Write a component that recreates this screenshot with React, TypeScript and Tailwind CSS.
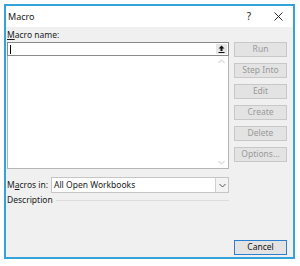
import React from 'react';

const font = { fontFamily: '"Noto Sans", "Open Sans", sans-serif' };

const SideButton: React.FC<{ label: string }> = ({ label }) => (
  <div className="h-[15px] w-[53px] border border-[#c8c8c8] bg-[#e3e3e3] flex items-center justify-center text-[8.5px] text-[#9a9a9a] leading-none">
    {label}
  </div>
);

export default function App() {
  return (
    <div className="w-[300px] h-[266px] bg-white" style={font}>
      <div className="ml-[4px] pt-[4px]">
        <div className="w-[291px] h-[255px] border-2 border-[#34a3dc] bg-[#f0f0f0] flex flex-col text-[#1a1a1a]">
          {/* Title bar */}
          <div className="h-[21px] bg-white flex items-center pl-[2px] pr-[10px] text-[9px]">
            <span>Macro</span>
            <span className="ml-auto mr-[23px] text-[10px]">?</span>
            <svg width="9" height="9" viewBox="0 0 9 9" className="mb-[1px]">
              <path d="M0.5 0.5 L8.5 8.5 M8.5 0.5 L0.5 8.5" stroke="#333" strokeWidth="1" />
            </svg>
          </div>

          {/* Body */}
          <div className="flex flex-1 pl-[1px] pr-[6px]">
            <div className="w-[223px] flex flex-col">
              <div className="h-[14px] mt-[1px] flex items-center text-[8.5px]">
                <span><span className="underline">M</span>acro name:</span>
              </div>
              <div className="h-[14px] border border-[#8a8a8a] bg-white flex items-center">
                <div className="ml-[2px] w-px h-[9px] bg-black" />
                <div className="ml-auto mr-[1px] h-[10px] w-[11px] bg-[#e6e6e6] flex items-center justify-center">
                  <svg width="7" height="8" viewBox="0 0 7 8">
                    <path d="M3.5 0.5 L6.5 3.5 L4.5 3.5 L4.5 6 L2.5 6 L2.5 3.5 L0.5 3.5 Z" fill="#111" />
                    <path d="M0.5 7.5 L6.5 7.5" stroke="#111" strokeWidth="1" />
                  </svg>
                </div>
              </div>
              <div className="h-[113px] border border-t-0 border-[#b5b5b5] bg-white flex">
                <div className="flex-1" />
                <div className="w-[14px] flex flex-col items-center justify-between py-[3px]">
                  <svg width="7" height="5" viewBox="0 0 7 5"><path d="M0.5 4 L3.5 1 L6.5 4" stroke="#c4c4c4" fill="none" /></svg>
                  <svg width="7" height="5" viewBox="0 0 7 5"><path d="M0.5 1 L3.5 4 L6.5 1" stroke="#c4c4c4" fill="none" /></svg>
                </div>
              </div>
              <div className="h-[16px] mt-[8px] flex items-center text-[8.5px]">
                <span className="w-[44px]">M<span className="underline">a</span>cros in:</span>
                <div className="flex-1 h-[16px] border border-[#c5c5c5] bg-white flex items-center pl-[2px]">
                  <span>All Open Workbooks</span>
                  <div className="ml-auto h-[14px] w-[13px] border-l border-[#d0d0d0] bg-[#f3f3f3] flex items-center justify-center">
                    <svg width="7" height="5" viewBox="0 0 7 5"><path d="M0.5 1 L3.5 4 L6.5 1" stroke="#555" fill="none" /></svg>
                  </div>
                </div>
              </div>
              <div className="h-[14px] flex items-center text-[8.5px]">
                <span>Description</span>
                <div className="flex-1 ml-[3px] h-px bg-[#dcdcdc]" />
              </div>
            </div>

            <div className="ml-[5px] flex flex-col pt-[15px] gap-[6px]">
              <SideButton label="Run" />
              <SideButton label="Step Into" />
              <SideButton label="Edit" />
              <SideButton label="Create" />
              <SideButton label="Delete" />
              <SideButton label="Options..." />
              <div className="mt-auto mb-[2px] h-[15px] w-[53px] border border-[#2a7fd0] bg-[#e3e3e3] flex items-center justify-center text-[8.5px] text-[#111] leading-none">
                Cancel
              </div>
            </div>
          </div>
        </div>
      </div>
    </div>
  );
}
